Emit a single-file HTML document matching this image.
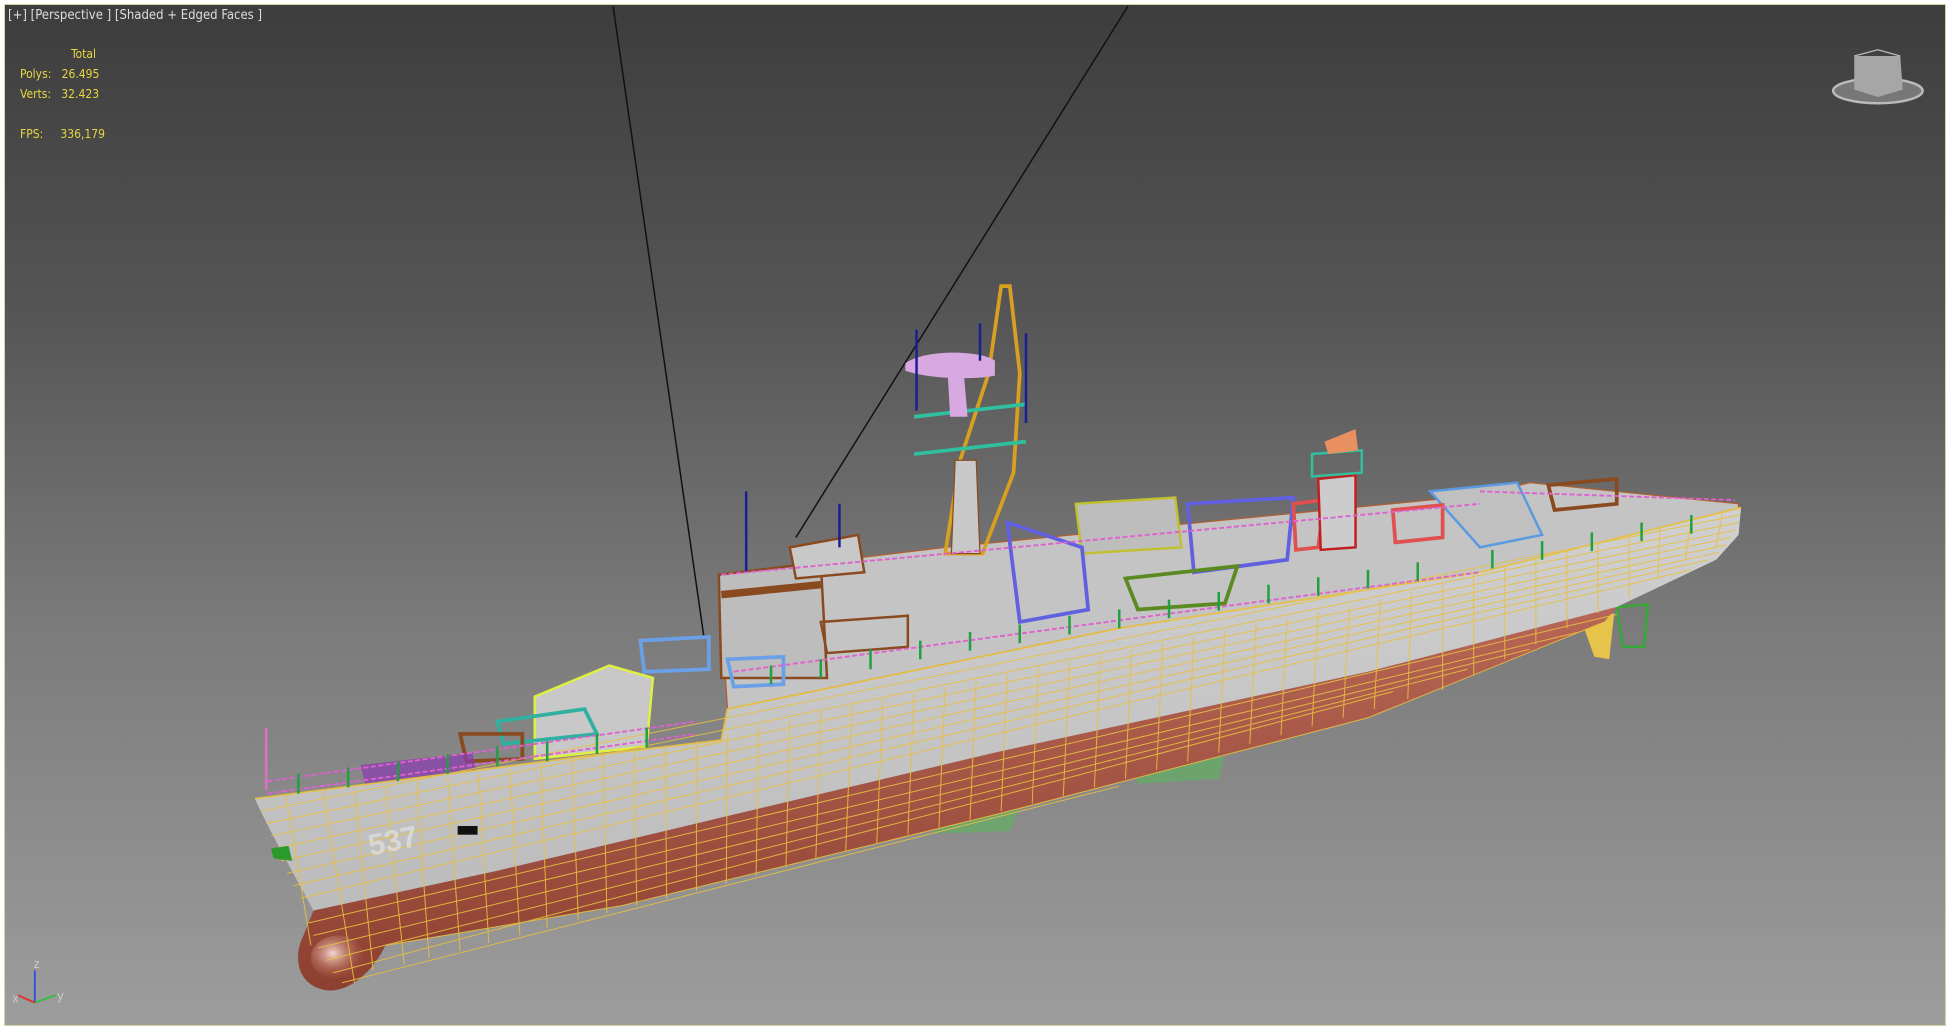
<!DOCTYPE html>
<html><head><meta charset="utf-8"><style>
html,body{margin:0;padding:0;width:1950px;height:1030px;overflow:hidden;background:#fff}
#vp{position:absolute;left:4px;top:4px;width:1942px;height:1022px;background:linear-gradient(#3d3d3d 0%,#555 30%,#7a7a7a 60%,#9d9d9d 100%);border:1px solid #d8d2a0;box-sizing:border-box}
.t{position:absolute;font-family:"DejaVu Sans Condensed","Liberation Sans",sans-serif;font-size:12px;color:#ddd;white-space:pre}
.y{color:#e8d640}
svg{position:absolute;left:0;top:0}
</style></head><body>
<div id="vp"></div>
<svg width="1950" height="1030" viewBox="0 0 1568 828" preserveAspectRatio="none">
<defs>
<linearGradient id="red" x1="0" y1="0" x2="0" y2="1"><stop offset="0" stop-color="#b86656"/><stop offset="1" stop-color="#8e4030"/></linearGradient>
<linearGradient id="side" x1="0" y1="0" x2="0" y2="1"><stop offset="0" stop-color="#d0d0d0"/><stop offset="1" stop-color="#bcbcbc"/></linearGradient>
<radialGradient id="bulb" cx="0.4" cy="0.4" r="0.6"><stop offset="0" stop-color="#f6d8d0"/><stop offset="1" stop-color="#b05a48" stop-opacity="0"/></radialGradient>
</defs>
<line x1="493" y1="5" x2="566" y2="512" stroke="#111" stroke-width="1.2"/>
<line x1="907" y1="5" x2="640" y2="432" stroke="#111" stroke-width="1.2"/>
<!-- keel fins / rudder -->
<path d="M1272,500 L1298,493 L1294,530 L1282,528Z" fill="#e6c34a"/>
<path d="M1300,488 L1325,486 L1322,520 L1305,520Z" fill="none" stroke="#3a3" stroke-width="2"/>
<path d="M1240,505 L1290,495" stroke="#c03030" stroke-width="3"/>
<path d="M745,658 L820,648 L812,668 L752,670Z" fill="#6a6" opacity=".8"/>
<path d="M910,618 L985,606 L980,626 L915,630Z" fill="#6a6" opacity=".8"/>
<!-- superstructure -->
<path d="M578,462 L760,440 L1190,398 L1230,388 L1398,405 L1398,425 L1190,465 L900,505 L585,570Z" fill="#c4c4c4" stroke="#b06030" stroke-width="1"/>
<path d="M578,462 L660,452 L665,545 L580,545Z" fill="#bdbdbd" stroke="#8a4a20" stroke-width="2"/>
<path d="M580,478 L660,470" stroke="#8a4a20" stroke-width="6"/>
<path d="M660,500 L730,495 L730,520 L665,525Z" fill="none" stroke="#8a4a20" stroke-width="2"/>
<path d="M430,560 L490,535 L525,545 L520,600 L430,610Z" fill="#c8c8c8" stroke="#e0f040" stroke-width="2"/>
<path d="M400,580 L470,570 L480,590 L405,598Z" fill="none" stroke="#30b0a0" stroke-width="3"/>
<path d="M865,405 L945,400 L950,440 L870,445Z" fill="#bdbdbd" stroke="#c0c030" stroke-width="2"/>
<path d="M1150,395 L1220,388 L1240,430 L1190,440Z" fill="#c0c0c0" stroke="#5a9ae0" stroke-width="2"/>
<path d="M810,420 L870,440 L875,490 L820,500Z" fill="none" stroke="#6060e0" stroke-width="3"/>
<path d="M955,405 L1040,400 L1035,450 L960,460Z" fill="none" stroke="#6060e0" stroke-width="3"/>
<path d="M905,465 L995,455 L985,485 L915,490Z" fill="none" stroke="#5a8a20" stroke-width="3"/>
<path d="M515,515 L570,512 L570,538 L518,540Z" fill="none" stroke="#6aa0e8" stroke-width="3"/>
<path d="M585,530 L630,528 L630,550 L590,552Z" fill="none" stroke="#6aa0e8" stroke-width="3"/>
<path d="M1040,405 L1065,402 L1060,440 L1042,442Z" fill="none" stroke="#e05050" stroke-width="3"/>
<path d="M1120,410 L1160,406 L1160,432 L1122,436Z" fill="none" stroke="#e05050" stroke-width="3"/>
<path d="M1060,385 L1090,382 L1090,440 L1062,442Z" fill="#ccc" stroke="#c02020" stroke-width="2"/>
<path d="M1055,365 L1095,362 L1095,380 L1055,383Z" fill="none" stroke="#30c0a0" stroke-width="2"/>
<path d="M1065,355 L1090,345 L1092,362 L1068,365Z" fill="#e89060"/>
<path d="M1245,390 L1300,385 L1300,405 L1250,410Z" fill="none" stroke="#8a4a20" stroke-width="3"/>
<path d="M635,440 L690,430 L695,460 L640,465Z" fill="#c8c8c8" stroke="#8a4a20" stroke-width="2"/>
<path d="M370,590 L420,590 L420,610 L375,612Z" fill="none" stroke="#8a4a20" stroke-width="3"/>
<path d="M290,615 L380,605 L385,630 L295,636Z" fill="#8a3ab0" opacity=".7"/>
<!-- mast -->
<path d="M760,445 L772,370 L795,300 L805,230 L812,230 L820,300 L815,380 L790,445Z" fill="none" stroke="#d8a020" stroke-width="3"/>
<path d="M765,445 L768,370 L785,370 L788,445Z" fill="#c8c8c8" stroke="#8a4a20" stroke-width="1"/>
<path d="M735,365 L825,355" stroke="#30c0a0" stroke-width="3"/>
<path d="M735,335 L825,325" stroke="#30c0a0" stroke-width="3"/>
<path d="M728,292 C745,280 790,282 800,290 L800,302 C780,306 745,304 728,298Z" fill="#d8a8e0"/>
<path d="M762,300 L775,300 L778,335 L764,335Z" fill="#d8a8e0"/>
<path d="M737,265 V330 M825,268 V340 M600,395 V460 M675,405 V440 M788,260 V290" stroke="#1a2090" stroke-width="2"/>
<!-- hull -->
<path d="M205,642 L470,608 L580,595 L585,570 L900,505 L1190,460 L1400,408 L1398,430 L1380,450 L1300,488 L1100,540 L800,605 L400,700 L252,732 C235,700 215,665 205,642Z" fill="url(#side)"/>
<path d="M252,732 L400,700 L800,605 L1100,540 L1300,488 L1290,500 L1100,577 L800,655 L500,728 L310,760 C295,790 272,800 258,795 C240,790 235,770 244,752Z" fill="url(#red)"/>
<ellipse cx="272" cy="770" rx="22" ry="18" fill="url(#bulb)"/>
<g stroke="#e8c040" stroke-width="0.8" fill="none" opacity=".9">
<path d="M205,642 L470,608 L580,595 L585,570 L900,505 L1190,460 L1400,408" stroke-width="1.5"/>
<path d="M210,652 L1399,414"/><path d="M214,662 L1398,420"/><path d="M218,672 L1396,426"/><path d="M222,682 L1392,432"/><path d="M226,692 L1388,438"/><path d="M231,702 L1382,444"/><path d="M236,712 L1374,450"/><path d="M242,722 L1360,458"/>
<path d="M248,742 L1300,494"/><path d="M252,752 L1270,508"/><path d="M256,762 L1230,522"/><path d="M262,772 L1180,538"/><path d="M268,782 L1120,556"/><path d="M275,790 L900,632"/>
<path d="M310,760 L500,728 L800,655 L1100,577 L1290,500"/>
<path d="M230,640 L250,760 M260,637 L285,790 M285,634 L300,780 M310,632 L325,775 M335,628 L345,770 M360,625 L370,765 M385,622 L393,758 M410,618 L418,752 M435,614 L440,746 M460,610 L465,740 M485,606 L488,734 M510,602 L512,728 M535,599 L536,722 M560,596 L560,716 M585,590 L584,710 M610,584 L608,704 M635,578 L632,697 M660,572 L656,690 M685,567 L680,684 M710,562 L705,678 M735,557 L730,671 M760,552 L755,665 M785,547 L780,659 M810,542 L805,652 M835,537 L830,646 M860,532 L855,640 M885,527 L880,633 M910,522 L905,626 M935,517 L930,619 M960,512 L955,612 M985,507 L980,605 M1010,502 L1005,598 M1035,497 L1030,591 M1060,492 L1055,584 M1085,487 L1080,577 M1110,482 L1105,570 M1135,476 L1132,562 M1160,470 L1160,555 M1185,462 L1185,543 M1210,455 L1210,530 M1235,449 L1235,518 M1260,443 L1260,505 M1285,436 L1285,493 M1310,430 L1310,480 M1335,424 L1333,466 M1360,418 L1355,450 M1385,412 L1380,440"/>
</g>
<!-- railings -->
<path d="M215,628 L560,580 M215,638 L560,590 M580,462 L1190,405 M590,540 L1190,460 M1190,395 L1395,402" stroke="#e060d0" stroke-width="1.5" stroke-dasharray="4 2" fill="none"/>
<g stroke="#20a040" stroke-width="2">
<path d="M240,622 V638 M280,617 V633 M320,612 V628 M360,606 V622 M400,600 V616 M440,596 V612 M480,590 V606 M520,585 V601 M620,535 V550 M660,530 V545 M700,522 V538 M740,515 V530 M780,508 V523 M820,502 V517 M860,495 V510 M900,490 V505 M940,482 V497 M980,476 V491 M1020,470 V485 M1060,464 V479 M1100,458 V473 M1140,452 V467 M1200,442 V457 M1240,435 V450 M1280,428 V443 M1320,420 V435 M1360,414 V429"/>
</g>
<path d="M214,585 V635" stroke="#e070c0" stroke-width="2"/>
<path d="M218,682 L232,680 L235,692 L220,690Z" fill="#2a9a2a"/>
<rect x="368" y="664" width="16" height="7" fill="#111"/>
<text x="298" y="688" font-family="Liberation Sans,sans-serif" font-size="24" font-weight="bold" fill="#e8e8e8" opacity=".6" transform="rotate(-12 298 688)">537</text>
<!-- view cube -->
<ellipse cx="1510" cy="73" rx="36" ry="10" fill="#777" stroke="#bbb" stroke-width="2"/>
<path d="M1491,45 L1528,45 L1530,72 L1510,78 L1491,72Z" fill="#a6a6a6"/>
<path d="M1491,45 L1510,40 L1528,45" fill="none" stroke="#bbb"/>
<!-- axis -->
<path d="M28,806 V780" stroke="#3050e0" stroke-width="1.5"/>
<path d="M28,806 L45,800" stroke="#30c040" stroke-width="1.5"/>
<path d="M28,806 L14,800" stroke="#e03030" stroke-width="1.5"/>
<text x="27" y="778" font-family="Liberation Sans,sans-serif" font-size="10" fill="#ccc">z</text>
<text x="46" y="804" font-family="Liberation Sans,sans-serif" font-size="10" fill="#ccc">y</text>
<text x="10" y="806" font-family="Liberation Sans,sans-serif" font-size="10" fill="#ccc">x</text>
</svg>
<div class="t" style="left:8px;top:8px;font-size:13px">[+] [Perspective ] [Shaded + Edged Faces ]</div>
<div class="t y" style="left:71px;top:47px">Total</div>
<div class="t y" style="left:20px;top:67px">Polys:   26.495</div>
<div class="t y" style="left:20px;top:87px">Verts:   32.423</div>
<div class="t y" style="left:20px;top:127px">FPS:     336,179</div>
</body></html>
